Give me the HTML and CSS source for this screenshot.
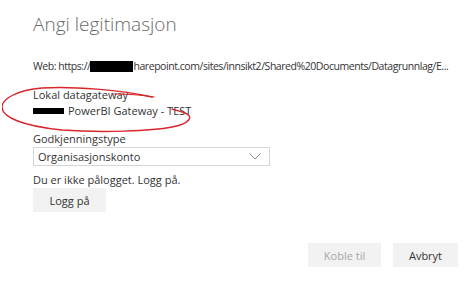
FILE: index.html
```html
<!DOCTYPE html>
<html lang="nb">
<head>
  <meta charset="utf-8" />
  <title>Angi legitimasjon</title>
  <link rel="stylesheet" href="styles.css">
</head>
<body>
  <div class="dialog">
    <h1 class="title">Angi legitimasjon</h1>
    <p class="source">Web: https://<span class="redact redact-url"></span>harepoint.com/sites/innsikt2/Shared%20Documents/Datagrunnlag/E...</p>

    <div class="field gateway">
      <div class="label">Lokal datagateway</div>
      <div class="value"><span class="redact redact-gw"></span>PowerBI Gateway - TEST</div>
      <!-- red hand-drawn circle -->
      <svg class="scribble" width="200" height="52" viewBox="0 0 200 52">
        <path d="M150 13 C120 6 70 2 40 4 C15 6 0 15 0 23 C0 33 20 42 60 46 C100 49 150 47 170 43 C188 40 192 32 183 29 C178 27 173 26 170 25" fill="none" stroke="#d9262a" stroke-width="1.4" stroke-linecap="round"/>
        <path d="M112 10 C125 10 140 11 152 13" fill="none" stroke="#d9262a" stroke-width="1.2" stroke-linecap="round"/>
      </svg>
    </div>

    <div class="field auth">
      <div class="label">Godkjenningstype</div>
      <div class="select">
        <span>Organisasjonskonto</span>
        <svg class="chevron" width="12" height="7" viewBox="0 0 12 7">
          <path d="M0.5 0.5 L6 6 L11.5 0.5" fill="none" stroke="#8a8a8a" stroke-width="1"/>
        </svg>
      </div>
    </div>

    <p class="status">Du er ikke pålogget. Logg på.</p>
    <button type="button" class="btn btn-login">Logg på</button>

    <div class="footer">
      <button type="button" class="btn btn-disabled">Koble til</button>
      <button type="button" class="btn">Avbryt</button>
    </div>
  </div>
</body>
</html>
```

FILE: styles.css
```css
body {
  margin: 0;
  background-color: #fff;
  font-family: 'Open Sans', 'Liberation Sans', sans-serif;
  font-size: 11px;
  color: #333;
}
.dialog {
  width: 474px;
  height: 286px;
  padding: 12px 16px 0 33px;
  box-sizing: border-box;
  display: flex;
  flex-direction: column;
}
.title {
  margin: 0;
  font-size: 19px;
  font-weight: 300;
  line-height: 24px;
  color: #6a6a6a;
}
.source {
  margin: 22px 0 0;
  line-height: 16px;
  white-space: nowrap;
  font-size: 10.5px;
  letter-spacing: -0.45px;
}
.redact {
  display: inline-block;
  background-color: #000;
  vertical-align: middle;
}
.redact-url {
  width: 43px;
  height: 11px;
  margin-top: -2px;
}
.redact-gw {
  width: 31px;
  height: 6px;
  margin-right: 4px;
  margin-top: -2px;
}
.field {
  display: flex;
  flex-direction: column;
}
.label, .value {
  line-height: 16px;
}
.gateway {
  position: relative;
  margin-top: 13px;
}
.scribble {
  position: absolute;
  left: -31px;
  top: -3px;
}
.auth {
  margin-top: 12px;
}
.select {
  width: 237px;
  height: 19px;
  border: 1px solid #d6d6d6;
  box-sizing: border-box;
  display: flex;
  align-items: center;
  justify-content: space-between;
  padding: 0 8px 0 4px;
}
.status {
  margin: 6px 0 0;
  line-height: 16px;
}
.btn {
  font-family: inherit;
  font-size: 11px;
  color: #333;
  background-color: #f2f2f2;
  border: none;
  height: 24px;
  padding: 0;
}
.btn-login {
  width: 73px;
}
.footer {
  display: flex;
  justify-content: flex-end;
  gap: 12px;
  margin-top: 31px;
}
.footer .btn {
  width: 65px;
}
.footer .btn-disabled {
  width: 73px;
  color: #a6a6a6;
}
```
